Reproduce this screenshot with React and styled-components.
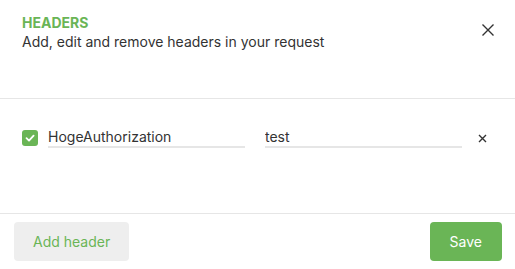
import styled, { createGlobalStyle } from "styled-components"

const GREEN = "#6ab556"

const GlobalStyle = createGlobalStyle`
  html, body {
    margin: 0;
    padding: 0;
    background: #fff;
  }
  body {
    font-family: Inter, "Noto Sans", sans-serif;
    color: #333;
  }
  * {
    box-sizing: border-box;
  }
`

const Modal = styled.div`
  width: 515px;
  height: 269px;
  display: flex;
  flex-direction: column;
  background: #fff;
`

const Header = styled.div`
  height: 99px;
  display: flex;
  justify-content: space-between;
  align-items: flex-start;
  padding: 13px 20px 0 22px;
  border-bottom: 1px solid #e6e6e6;
`

const Titles = styled.div`
  display: flex;
  flex-direction: column;
`

const Title = styled.h2`
  margin: 0;
  font-size: 14px;
  line-height: 19px;
  font-weight: 700;
  color: ${GREEN};
`

const Subtitle = styled.p`
  margin: 0;
  font-size: 14px;
  line-height: 19px;
  color: #333;
`

const CloseButton = styled.button`
  border: 0;
  background: none;
  padding: 0;
  margin-top: 10px;
  width: 14px;
  height: 14px;
  display: flex;
  cursor: pointer;
`

const Body = styled.div`
  flex: 1;
  display: flex;
  flex-direction: column;
  padding: 29px 0 0 22px;
  border-bottom: 1px solid #e6e6e6;
`

const Row = styled.div`
  display: flex;
  align-items: center;
  gap: 10px;
`

const Check = styled.span`
  width: 16px;
  height: 16px;
  border-radius: 3px;
  background: ${GREEN};
  display: flex;
  align-items: center;
  justify-content: center;
  flex-shrink: 0;
`

const Fields = styled.div`
  display: flex;
  gap: 20px;
`

const Field = styled.input`
  width: 197px;
  height: 20px;
  border: 0;
  border-bottom: 2px solid #e6e6e6;
  padding: 0 0 2px;
  font-family: inherit;
  font-size: 14px;
  color: #333;
  outline: none;
  background: none;
`

const RemoveButton = styled.button`
  border: 0;
  background: none;
  padding: 0;
  margin-left: 3px;
  width: 14px;
  height: 14px;
  display: flex;
  align-items: center;
  justify-content: center;
  cursor: pointer;
`

const Footer = styled.div`
  height: 55px;
  display: flex;
  justify-content: space-between;
  align-items: center;
  padding: 0 13px 0 14px;
`

const Button = styled.button`
  height: 39px;
  padding: 0 ${(p) => (p.$primary ? "20px" : "19px")};
  border: 0;
  border-radius: 4px;
  font-family: inherit;
  font-size: 14px;
  background: ${(p) => (p.$primary ? GREEN : "#eeeeee")};
  color: ${(p) => (p.$primary ? "#fff" : GREEN)};
  cursor: pointer;
`

const App = () => {
  return (
    <>
      <GlobalStyle />
      <Modal>
        <Header>
          <Titles>
            <Title>HEADERS</Title>
            <Subtitle>Add, edit and remove headers in your request</Subtitle>
          </Titles>
          <CloseButton aria-label="close">
            <svg width="14" height="14" viewBox="0 0 14 14">
              <path d="M1.5 1.5 L12.5 12.5 M12.5 1.5 L1.5 12.5" stroke="#333" strokeWidth="1.4" />
            </svg>
          </CloseButton>
        </Header>
        <Body>
          <Row>
            <Check>
              <svg width="10" height="10" viewBox="0 0 10 10">
                <path d="M1.5 5.2 L4 7.6 L8.6 2.6" fill="none" stroke="#fff" strokeWidth="1.8" strokeLinecap="round" strokeLinejoin="round" />
              </svg>
            </Check>
            <Fields>
              <Field defaultValue="HogeAuthorization" />
              <Field defaultValue="test" />
            </Fields>
            <RemoveButton aria-label="remove">
              <svg width="9" height="9" viewBox="0 0 9 9">
                <path d="M1 1 L8 8 M8 1 L1 8" stroke="#333" strokeWidth="1.4" />
              </svg>
            </RemoveButton>
          </Row>
        </Body>
        <Footer>
          <Button>Add header</Button>
          <Button $primary>Save</Button>
        </Footer>
      </Modal>
    </>
  )
}

export default App
